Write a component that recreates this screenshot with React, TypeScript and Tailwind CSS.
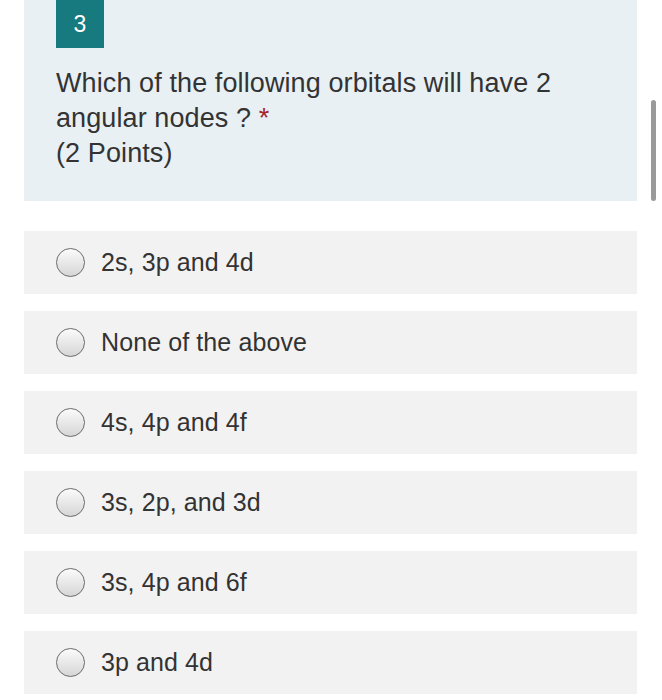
const options = [
	"2s, 3p and 4d",
	"None of the above",
	"4s, 4p and 4f",
	"3s, 2p, and 3d",
	"3s, 4p and 6f",
	"3p and 4d",
];

function Radio() {
	return (
		<span className="w-[29px] h-[29px] rounded-full border-[1.5px] border-[#6b6b6b] bg-gradient-to-b from-[#fbfbfb] to-[#d6d6d6] shrink-0" />
	);
}

export default function App() {
	return (
		<div className="w-[662px] h-[700px] bg-white relative overflow-hidden font-['Liberation_Sans',Arial,sans-serif] text-[#333]">
			{/* Question card */}
			<div className="ml-[24px] w-[613px] bg-[#e8f0f4] pl-[32px] pr-[16px] pb-[30px]">
				<div className="w-[48px] h-[48px] bg-[#167a7e] text-white text-[23px] flex items-center justify-center">
					3
				</div>
				<div className="mt-[18px] text-[27px] leading-[35px] tracking-[0.1px]">
					<div>Which of the following orbitals will have 2</div>
					<div>
						angular nodes ? <span className="text-[#a4262c]">*</span>
					</div>
					<div>(2 Points)</div>
				</div>
			</div>

			{/* Options */}
			<div className="ml-[24px] w-[613px] mt-[30px] flex flex-col gap-[17px]">
				{options.map((option, index) => (
					<div key={index} className="h-[63px] bg-[#f2f2f2] flex items-center pl-[32px] gap-[16px]">
						<Radio />
						<span className="text-[25px] leading-none tracking-[0.1px]">{option}</span>
					</div>
				))}
			</div>

			{/* Scrollbar */}
			<div className="absolute left-[651px] top-[100px] w-[5px] h-[101px] rounded-full bg-[#9a9a9a]" />
		</div>
	);
}
